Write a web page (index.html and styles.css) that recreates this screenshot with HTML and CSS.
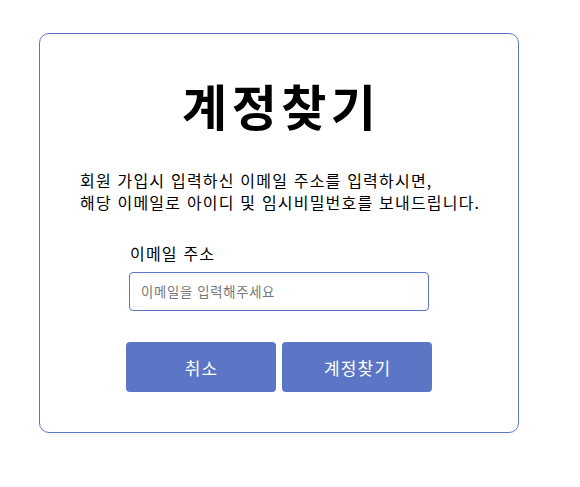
FILE: index.html
```html
<!DOCTYPE html>
<html lang="ko">
<head>
<meta charset="utf-8">
<title>계정찾기</title>
<link rel="stylesheet" href="styles.css">
</head>
<body>
<div class="card">
  <h1 class="title">계정찾기</h1>
  <p class="desc">회원 가입시 입력하신 이메일 주소를 입력하시면,<br>해당 이메일로 아이디 및 임시비밀번호를 보내드립니다.</p>
  <div class="form">
    <label class="label" for="email">이메일 주소</label>
    <input class="input" id="email" type="text" placeholder="이메일을 입력해주세요">
  </div>
  <div class="buttons">
    <button class="btn">취소</button>
    <button class="btn">계정찾기</button>
  </div>
</div>
</body>
</html>
```
FILE: styles.css
```css
html, body {
  margin: 0;
  padding: 0;
  background: #ffffff;
}
body {
  font-family: "Noto Sans CJK KR", "Noto Sans", sans-serif;
  color: #000;
  padding: 33px 0 0 39px;
}
.card {
  box-sizing: border-box;
  width: 480px;
  height: 400px;
  border: 1px solid #5b76c8;
  border-radius: 10px;
  padding: 41px 40px 40px;
  display: flex;
  flex-direction: column;
  align-items: center;
}
.title {
  margin: 0;
  font-size: 49px;
  line-height: 60px;
  font-weight: 700;
  letter-spacing: 4.5px;
  text-indent: 4.5px;
  text-align: center;
}
.desc {
  align-self: stretch;
  margin: 34px 0 0;
  font-size: 16px;
  line-height: 22px;
  letter-spacing: 1.2px;
  white-space: nowrap;
}
.form {
  margin-top: 29px;
  width: 300px;
  display: flex;
  flex-direction: column;
  gap: 8px;
}
.label {
  font-size: 16px;
  line-height: 22px;
  letter-spacing: 1.2px;
  padding-left: 1px;
}
.input {
  box-sizing: border-box;
  width: 300px;
  height: 39px;
  border: 1px solid #5b76c8;
  border-radius: 4px;
  padding: 0 11px;
  font-family: "Noto Sans CJK KR", sans-serif;
  font-size: 13.33px;
  letter-spacing: 0.7px;
  outline: none;
}
.input::placeholder {
  color: #777;
}
.buttons {
  margin-top: 31px;
  display: flex;
  gap: 6px;
}
.btn {
  width: 150px;
  height: 50px;
  border: none;
  border-radius: 4px;
  background: #5b76c4;
  color: #fff;
  font-family: "Noto Sans CJK KR", sans-serif;
  font-size: 17px;
  letter-spacing: 1.2px;
  text-indent: 1.2px;
  cursor: pointer;
}
```
